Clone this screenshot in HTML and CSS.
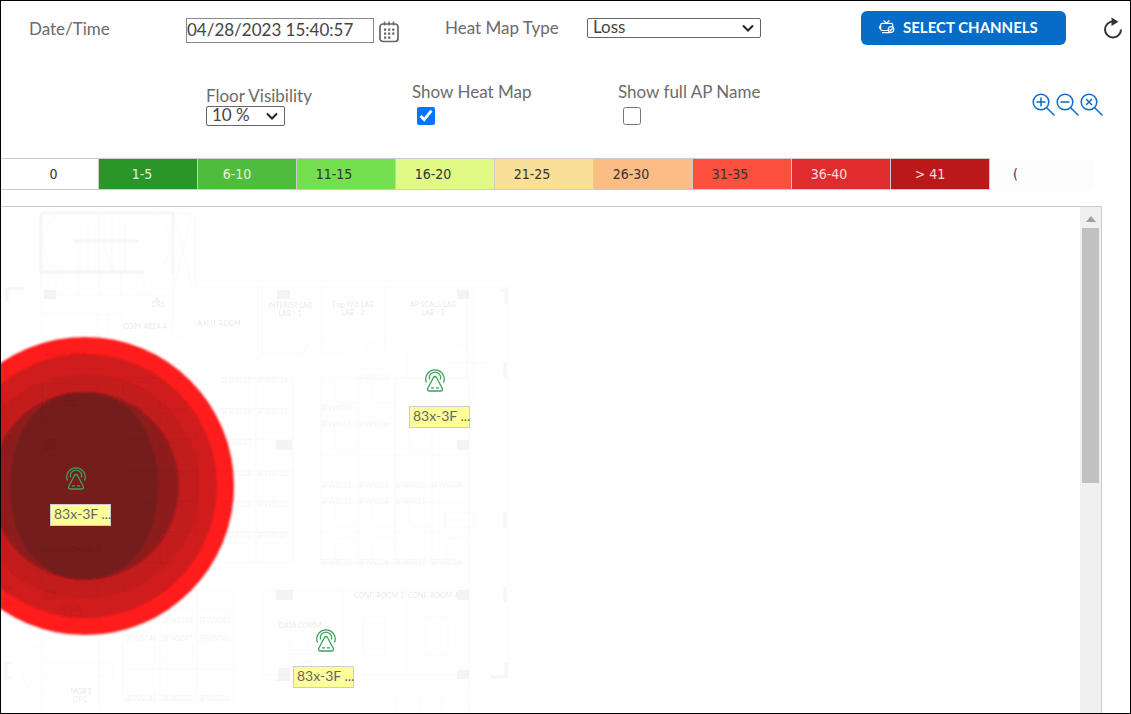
FILE: index.html
```
<!DOCTYPE html>
<html lang="en">
<head>
    <meta charset="UTF-8">
    <meta name="viewport" content="width=device-width, initial-scale=1.0">
    <title>Heat Map</title>
    <link rel="stylesheet" href="styles.css">
</head>
<body>
    <div class="page">
        <form class="toolbar">
            <label class="date-label" for="dateTime">Date/Time</label>
            <div class="date-field">
                <input type="text" id="dateTime" value="04/28/2023 15:40:57">
                <button type="button" class="icon-btn" aria-label="Pick date">
                    <svg width="20" height="22" viewBox="0 0 20 22" fill="none" stroke="#666">
                        <rect x="1" y="3" width="18" height="17.500" rx="3" stroke-width="1.700"/>
                        <path d="M5.500 0.500v4M10 0.500v4M14.500 0.500v4" stroke-width="1.500"/>
                        <path d="M5 8.700h11M5 12.700h11M5 16.700h7" stroke-width="2.200" stroke-dasharray="2.200 1.900"/>
                    </svg>
                </button>
            </div>
            <label class="type-label" for="mapType">Heat Map Type</label>
            <select id="mapType" class="type-select">
                <option>Loss</option>
            </select>
            <button type="button" class="channels-btn">
                <svg width="16" height="14" viewBox="0 0 16 14" fill="none" stroke="#fff" stroke-width="1.200" stroke-linecap="round">
                    <path d="M9 10.500H3.200a1.500 1.500 0 0 1-1.500-1.500V4.800a1.500 1.500 0 0 1 1.500-1.500h9a1.500 1.500 0 0 1 1.500 1.500v1.500M5 0.700l2.500 2.400L10 0.700M3.500 12.700h7M0.800 6v2.500"/>
                    <circle cx="12" cy="9.500" r="2.800"/>
                    <path d="M10.800 9.600l0.900 0.900 1.600-1.900"/>
                </svg>
                SELECT CHANNELS
            </button>
            <button type="button" class="icon-btn" aria-label="Refresh">
                <svg width="20" height="22" viewBox="0 0 20 22">
                    <path d="M10 4.500A8 8 0 1 0 18 12.500" fill="none" stroke="#333" stroke-width="2"/>
                    <path d="M8.500 0.500L15.500 4.800L8.500 9z" fill="#333"/>
                </svg>
            </button>
        </form>

        <div class="options">
            <div class="option low">
                <label for="visibility">Floor Visibility</label>
                <select id="visibility" class="visibility-select">
                    <option>10 %</option>
                </select>
            </div>
            <div class="option">
                <label for="showMap">Show Heat Map</label>
                <input type="checkbox" id="showMap" checked>
            </div>
            <div class="option">
                <label for="showName">Show full AP Name</label>
                <input type="checkbox" id="showName">
            </div>
            <div class="zoom-tools">
                <button type="button" class="icon-btn" aria-label="Zoom in">
                    <svg width="24" height="24" viewBox="0 0 24 24" fill="none" stroke="#0a6cc4" stroke-width="1.500">
                        <circle cx="9" cy="9" r="7.800"/><path d="M14.500 14.500L22.500 22.500M9 4.500v9M4.500 9h9"/>
                    </svg>
                </button>
                <button type="button" class="icon-btn" aria-label="Zoom out">
                    <svg width="24" height="24" viewBox="0 0 24 24" fill="none" stroke="#0a6cc4" stroke-width="1.500">
                        <circle cx="9" cy="9" r="7.800"/><path d="M14.500 14.500L22.500 22.500M4.500 9h9"/>
                    </svg>
                </button>
                <button type="button" class="icon-btn" aria-label="Reset zoom">
                    <svg width="24" height="24" viewBox="0 0 24 24" fill="none" stroke="#0a6cc4" stroke-width="1.500">
                        <circle cx="9" cy="9" r="7.800"/><path d="M14.500 14.500L22.500 22.500M6 6l6 6M12 6l-6 6"/>
                    </svg>
                </button>
            </div>
        </div>

        <div class="legend">
            <div class="range none">0</div>
            <div class="range r1">1-5</div>
            <div class="range r2">6-10</div>
            <div class="range r3">11-15</div>
            <div class="range r4">16-20</div>
            <div class="range r5">21-25</div>
            <div class="range r6">26-30</div>
            <div class="range r7">31-35</div>
            <div class="range r8">36-40</div>
            <div class="range r9">&gt; 41</div>
            <div class="legend-end">(</div>
        </div>

        <div class="map">
            <div class="canvas">
                <svg class="heat" width="520" height="506" viewBox="1 207 520 506">
                    <defs>
                        <filter id="soft"><feGaussianBlur stdDeviation="1.200"/></filter>
                    </defs>
                    <g filter="url(#soft)">
                        <circle cx="85" cy="486" r="149" fill="#ff1a1a"/>
                        <circle cx="85" cy="486" r="132" fill="#d01a1a"/>
                        <ellipse cx="85" cy="486" rx="115" ry="112" fill="#c21a1a"/>
                        <circle cx="85" cy="486" r="94" fill="#8f1a1a"/>
                        <path d="M84 393C134 393 158 436 158 486S134 579 84 579S10 536 10 486S34 393 84 393z" fill="#741a1a"/>
                    </g>
                </svg>
                <svg class="plan" width="520" height="506" viewBox="1 207 520 506">
                    <g class="thick">
                        <path d="M41 213h132v60M41 213v59h103M74 241h65"/>
                        <path d="M7 301V289h17M6 364v12h6M12 437H6v15h6M12 513H6v15h6M12 588H6v15h6M12 663H6v15h6"/>
                        <path d="M500 290h6v14M505 362v15M505 512v16M505 587v15M490 677h16v-14"/>
                    </g>
                    <g class="thin">
                        <path d="M173 213h22v75M41 272v16H5v425M60 213c-22 10-22 50 0 59M155 213c20 10 20 50 0 59M78 243v29M88 220v52M99 213v59M112 213v59M125 220v52M102 243l13 29M174 214l18 73M192 214l-18 73"/>
                        <path d="M56 273v22h112M78 273v22M99 273v22M121 273v22M144 273v22M173 273v56M173 360h85M258 288v72M42 303v410M42 314h80M42 355h80M98 314v60M108 314v20M122 314v20"/>
                        <path d="M196 287h312v390M262 287v67h42M322 287v67M385 287v67M407 354v24h60v-90M323 354h25M474 288v110M468 363h22M471 362c0-10-4-14-15-18M304 354c2-12 8-14 18-14M365 354c2-12 8-14 20-14"/>
                        <path d="M123 378h75M123 408h75M123 439h75M123 471h75M123 501h75M123 532h75M123 563h75M123 378v185M160 378v185M197 378v185M220 378h73M220 408h73M220 439h73M220 471h73M220 501h73M220 532h73M220 563h73M256 378v185M293 378v185"/>
                        <path d="M321 378h148M321 408h148M321 424h148M321 455h148M321 486h148M321 502h148M321 532h148M321 563h148M321 378v185M358 378v185M395 378v185M432 378v185M469 378v213"/>
                        <path d="M123 590h111v110H123zM123 669h111M160 590v110M197 590v110M125 610h30v15M163 610h30v15M200 610h30v15M125 660h30v-15M163 660h30v-15"/>
                        <path d="M263 590h206v85H263zM343 590v85M406 590v85M363 617h22v38h-22zM426 617h22v38h-22zM263 680h206v33M380 696h88M290 640h18v10h-18zM290 654h22v8h-22zM396 697v16M420 697v16M442 697v16M445 513h29v14h-29zM445 363h23"/>
                        <path d="M42 384h56v36H42zM42 444h56M42 505h56v34H42M42 550h56v48H42M23 660c0-12 10-14 20-16M23 674c2 14 10 18 20 20M43 662h70v14H43M99 600v110M183 338c-12 0-12-10-12-12"/>
                        <path d="M335 380v18c0 8 20 4 22 4M372 380v18c0 8 20 4 22 4M409 426v18c0 8 20 4 22 4M335 426v18c0 8 20 4 22 4M335 504v18c0 8 20 4 22 4M372 504v18c0 8 20 4 22 4M409 504v18c0 8 20 4 22 4M335 560v-18c0-6 20-4 22-4M372 560v-18c0-6 20-4 22-4M446 560v-18c0-6 20-4 22-4"/>
                    </g>
                    <path class="pillar" d="M44 290h12v9H44zM44 439h12v11H44zM44 590h12v10H44zM277 290h13v9h-13zM457 290h12v9h-12zM276 440h16v10h-16zM457 440h12v10h-12zM276 590h17v10h-17zM457 590h12v10h-12zM278 668h12v13h-12zM457 670h12v9h-12zM157 296l3 5h-6z"/>
                    <g class="room">
                        <text x="158" y="307">DRS</text>
                        <text x="145" y="329">COPY AREA 4</text>
                        <text x="219" y="326">A.H.U. ROOM</text>
                        <text x="66" y="356">BREAK AREA</text>
                        <text x="71" y="398">MGR'S</text>
                        <text x="71" y="406">OFC.</text>
                        <text x="70" y="552">DISCUSSION RM. 7</text>
                        <text x="71" y="611">AP LAB</text>
                        <text x="71" y="618">LAB - 4</text>
                        <text x="81" y="694">MGR'S</text>
                        <text x="81" y="702">OFC.</text>
                        <text x="290" y="308">INTEROP LAB</text>
                        <text x="290" y="316">LAB - 1</text>
                        <text x="353" y="307">Eng-Wifi LAB</text>
                        <text x="353" y="315">LAB - 2</text>
                        <text x="433" y="307">AP SCALE LAB</text>
                        <text x="433" y="315">LAB - 3</text>
                        <text x="379" y="598">CONF. ROOM 3</text>
                        <text x="433" y="598">CONF. ROOM 4</text>
                        <text x="300" y="628">DATA COMM</text>
                    </g>
                    <g class="desk">
                        <text x="141" y="383">3FWS037</text><text x="177" y="383">3FWS036</text><text x="236" y="383">3FWS025</text><text x="272" y="383">3FWS024</text>
                        <text x="141" y="414">3FWS038</text><text x="177" y="414">3FWS035</text><text x="236" y="414">3FWS026</text><text x="272" y="414">3FWS023</text>
                        <text x="141" y="445">3FWS039</text><text x="177" y="445">3FWS034</text><text x="236" y="445">3FWS027</text>
                        <text x="141" y="476">3FWS040</text><text x="177" y="476">3FWS033</text><text x="236" y="476">3FWS028</text><text x="272" y="476">3FWS022</text>
                        <text x="141" y="507">3FWS041</text><text x="177" y="507">3FWS032</text><text x="236" y="507">3FWS029</text><text x="272" y="507">3FWS021</text>
                        <text x="141" y="538">3FWS042</text><text x="177" y="538">3FWS031</text><text x="236" y="538">3FWS030</text><text x="272" y="538">3FWS020</text>
                        <text x="177" y="623">3FWS044</text><text x="214" y="623">3FWS045</text>
                        <text x="141" y="641">3FWS048</text><text x="177" y="641">3FWS047</text><text x="214" y="641">3FWS046</text>
                        <text x="141" y="701">3FWS049</text><text x="177" y="701">3FWS050</text><text x="214" y="701">3FWS051</text>
                        <text x="336" y="411">3FWS004</text><text x="373" y="380">3FWS003</text>
                        <text x="336" y="427">3FWS005</text><text x="373" y="427">3FWS006</text>
                        <text x="336" y="488">3FWS012</text><text x="373" y="488">3FWS011</text><text x="410" y="488">3FWS010</text><text x="446" y="488">3FWS009</text>
                        <text x="336" y="504">3FWS013</text><text x="373" y="504">3FWS014</text><text x="410" y="504">3FWS015</text>
                        <text x="336" y="565">3FWS019</text><text x="373" y="565">3FWS018</text><text x="410" y="565">3FWS017</text><text x="446" y="565">3FWS016</text>
                    </g>
                </svg>

                <svg width="0" height="0" class="symbols">
                    <symbol id="ap" viewBox="0 0 22 24">
                        <path d="M2.500 14.500A9.200 9.200 0 1 1 19.500 14.500M5.700 11.500A5.600 5.600 0 1 1 16.300 11.500M9.500 9.500L3.800 20.300Q3 23 5.500 23h11Q19 23 18.200 20.300L12.500 9.500Q11 7.500 9.500 9.500zM7 19.800h3M12 19.800h3" fill="none" stroke="currentColor" stroke-width="1.300"/>
                    </symbol>
                </svg>
                <div class="ap ap-west">
                    <svg width="22" height="24"><use href="#ap"/></svg>
                    <span>83x-3F ...</span>
                </div>
                <div class="ap ap-east">
                    <svg width="22" height="24"><use href="#ap"/></svg>
                    <span>83x-3F ...</span>
                </div>
                <div class="ap ap-south">
                    <svg width="22" height="24"><use href="#ap"/></svg>
                    <span>83x-3F ...</span>
                </div>
            </div>
            <div class="scrollbar">
                <svg width="10" height="6" viewBox="0 0 10 6"><path d="M0 6L5 0L10 6z" fill="#a0a0a0"/></svg>
                <div class="thumb"></div>
            </div>
        </div>
    </div>
</body>
</html>
```
FILE: styles.css
```
* {
    box-sizing: border-box;
}
body {
    margin: 0;
    font-family: 'Lato', sans-serif;
    font-size: 17px;
    line-height: 20px;
    color: #6b6b6b;
    background: #fff;
}
.page {
    display: flex;
    flex-direction: column;
    height: 100vh;
    border: 1px solid #000;
    overflow: hidden;
}
input, select, button {
    font-family: inherit;
    font-size: 17px;
    color: #444;
}
.icon-btn {
    display: flex;
    padding: 0;
    border: none;
    background: none;
    cursor: pointer;
}
.toolbar {
    display: flex;
    align-items: center;
    padding: 10px 7px 0 28px;
}
.date-label {
    width: 157px;
    padding-top: 2px;
}
.date-field {
    display: flex;
    align-items: flex-end;
    gap: 5px;
    padding-top: 5px;
}
.date-field input {
    width: 188px;
    height: 25px;
    padding: 0 0 3px;
    border: 1px solid #8a8a8a;
}
.type-label {
    width: 142px;
    margin-left: 46px;
}
select {
    appearance: none;
    height: 20px;
    padding: 0 24px 2px 5px;
    border: 1px solid #666;
    border-radius: 2px;
    background: #fff url("data:image/svg+xml,%3Csvg xmlns='http://www.w3.org/2000/svg' width='12' height='8'%3E%3Cpath d='M1 1.500l5 5 5-5' fill='none' stroke='%23222' stroke-width='2'/%3E%3C/svg%3E") no-repeat right 6px center;
    line-height: 16px;
}
.type-select {
    width: 174px;
}
.channels-btn {
    display: flex;
    align-items: center;
    gap: 8px;
    width: 205px;
    height: 34px;
    margin: 0 37px 0 auto;
    padding: 0 0 2px 18px;
    border: none;
    border-radius: 6px;
    background: #056cc7;
    color: #fff;
    font-size: 15px;
    font-weight: bold;
    white-space: nowrap;
    cursor: pointer;
}
.options {
    display: flex;
    height: 76px;
    margin-top: 37px;
    padding: 0 26px 0 205px;
}
.option {
    display: flex;
    flex-direction: column;
    align-items: flex-start;
    width: 206px;
}
.option.low {
    padding-top: 4px;
}
.visibility-select {
    width: 79px;
}
.option input {
    width: 18px;
    height: 18px;
    margin: 5px;
}
.zoom-tools {
    display: flex;
    align-items: flex-start;
    margin-left: auto;
    padding-top: 11px;
}
.legend {
    display: flex;
    font-family: 'DejaVu Sans Condensed', 'DejaVu Sans', sans-serif;
    font-stretch: condensed;
    font-size: 14px;
    color: #333;
}
.range {
    width: 99px;
    height: 32px;
    padding: 5px 24px 0 0;
    border: 1px solid #ccc;
    border-left: none;
    text-align: center;
}
.range.none {
    width: 98px;
    padding: 5px 0 0 8px;
}
.range.r1 {
    padding-right: 12px;
}
.range.r2, .range.r9 {
    padding-right: 20px;
}
.r1 {
    background: #2a962a;
    color: #e4f2e4;
}
.r2 {
    background: #4fbc3d;
    color: #e4f2e4;
}
.r3 {
    background: #74e04f;
}
.r4 {
    background: #e0fa85;
}
.r5 {
    background: #fadf98;
}
.r6 {
    background: #fbbc86;
}
.r7 {
    background: #fd503e;
}
.r8 {
    background: #e02c2e;
    color: #fbdcdc;
}
.r9 {
    background: #bb1819;
    color: #fbdcdc;
}
.legend-end {
    width: 103px;
    padding: 6px 0 0 23px;
    background: #fdfdfd;
}
.map {
    display: flex;
    flex: 1;
    margin: 16px 28px 0 0;
    border-top: 1px solid #ccc;
    border-right: 1px solid #ccc;
    overflow: hidden;
}
.canvas {
    position: relative;
    flex: 1;
    background: #fefefe;
    overflow: hidden;
}
.heat, .plan, .symbols {
    position: absolute;
    left: 0;
    top: 0;
}
.thick {
    fill: none;
    stroke: rgba(0, 0, 0, 0.03);
    stroke-width: 3;
}
.thin {
    fill: none;
    stroke: rgba(0, 0, 0, 0.02);
    stroke-width: 1;
}
.pillar {
    fill: rgba(0, 0, 0, 0.04);
}
.room, .desk {
    font-size: 7px;
    text-anchor: middle;
    fill: rgba(0, 0, 0, 0.11);
}
.desk {
    fill: rgba(0, 60, 110, 0.07);
}
/* access points, placed on the floor plan */
.ap {
    position: absolute;
    display: flex;
    flex-direction: column;
    gap: 14px;
    width: 61px;
    color: #3fa05a;
}
.ap svg {
    margin-left: 15px;
}
.ap span {
    height: 22px;
    padding-left: 3px;
    border: 1px solid #ccc;
    background: #ffff99;
    font-size: 14px;
    line-height: 18px;
    color: #666;
    white-space: nowrap;
}
.ap-west {
    left: 49px;
    top: 259px;
}
.ap-east {
    left: 408px;
    top: 161px;
}
.ap-south {
    left: 292px;
    top: 421px;
}
.ap-south svg {
    margin-left: 22px;
}
.scrollbar {
    display: flex;
    flex-direction: column;
    align-items: center;
    gap: 6px;
    width: 21px;
    padding-top: 9px;
    background: #f0f0f0;
}
.thumb {
    width: 17px;
    height: 255px;
    background: #c1c1c1;
}
```
